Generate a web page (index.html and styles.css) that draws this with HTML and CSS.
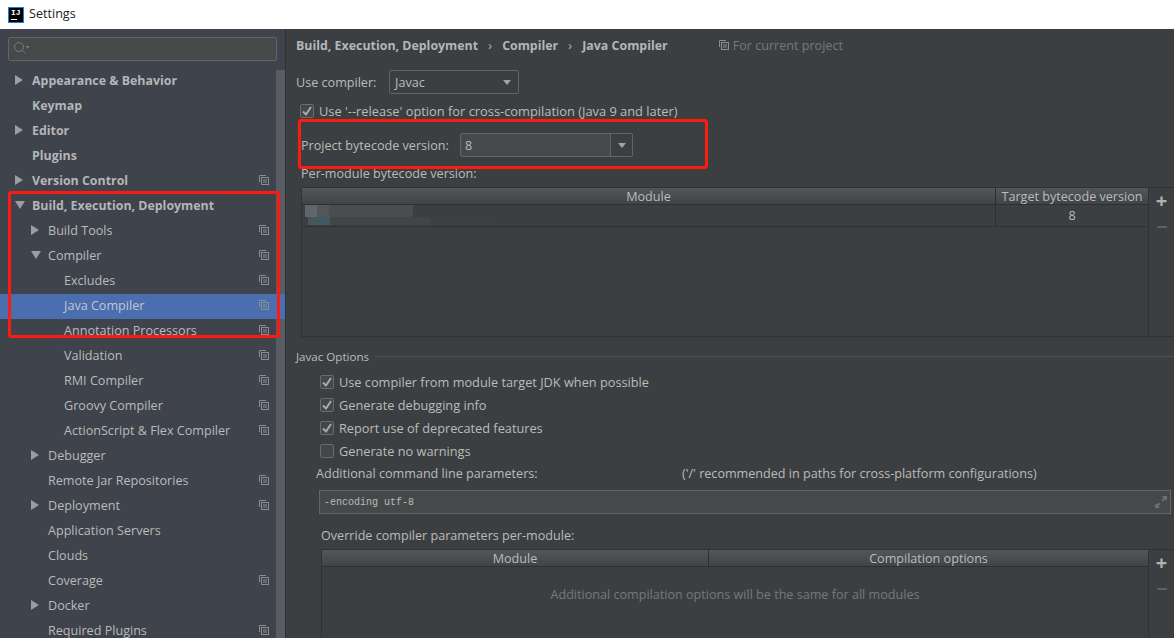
FILE: index.html
```html
<!DOCTYPE html>
<html lang="en">
<head>
  <meta charset="UTF-8">
  <title>Settings</title>
  <link rel="stylesheet" href="styles.css">
</head>
<body>
  <svg class="defs" width="0" height="0">
    <symbol id="copy" viewBox="0 0 10 10">
      <path d="M0.5 7V0.5H7" fill="none" stroke="#8a8d91"/>
      <rect x="2.5" y="2.5" width="7" height="7" fill="none" stroke="#8a8d91"/>
      <path d="M4 5H8M4 7H8" stroke="#8a8d91"/>
    </symbol>
    <symbol id="check" viewBox="0 0 14 14">
      <path d="M3 7.5L6 10.5L11 3" fill="none" stroke="#a9abad" stroke-width="2"/>
    </symbol>
  </svg>

  <div class="titlebar">
    <div class="logo"><span class="logo-text">IJ</span><span class="logo-bar"></span></div>
    <span class="title-text">Settings</span>
  </div>

  <div class="window">
    <aside class="sidebar">
      <div class="search">
        <svg width="18" height="14" viewBox="0 0 18 14">
          <circle cx="6" cy="6" r="4.5" fill="none" stroke="#777b80"/>
          <path d="M9.5 9.5L12.5 12.5" stroke="#777b80"/>
          <path d="M12.5 5H17L14.7 7.5Z" fill="#777b80"/>
        </svg>
      </div>
      <div class="scrollbar"></div>
      <ul class="tree">
        <li class="row bold"><i class="arrow right"></i>Appearance &amp; Behavior</li>
        <li class="row bold"><i class="arrow"></i>Keymap</li>
        <li class="row bold"><i class="arrow right"></i>Editor</li>
        <li class="row bold"><i class="arrow"></i>Plugins</li>
        <li class="row bold"><i class="arrow right"></i>Version Control<svg class="copy"><use href="#copy"/></svg></li>
        <li class="row bold"><i class="arrow down"></i>Build, Execution, Deployment</li>
        <li class="row lvl1"><i class="arrow right"></i>Build Tools<svg class="copy"><use href="#copy"/></svg></li>
        <li class="row lvl1"><i class="arrow down"></i>Compiler<svg class="copy"><use href="#copy"/></svg></li>
        <li class="row lvl2">Excludes<svg class="copy"><use href="#copy"/></svg></li>
        <li class="row lvl2 selected">Java Compiler<svg class="copy"><use href="#copy"/></svg></li>
        <li class="row lvl2">Annotation Processors<svg class="copy"><use href="#copy"/></svg></li>
        <li class="row lvl2">Validation<svg class="copy"><use href="#copy"/></svg></li>
        <li class="row lvl2">RMI Compiler<svg class="copy"><use href="#copy"/></svg></li>
        <li class="row lvl2">Groovy Compiler<svg class="copy"><use href="#copy"/></svg></li>
        <li class="row lvl2">ActionScript &amp; Flex Compiler<svg class="copy"><use href="#copy"/></svg></li>
        <li class="row lvl1"><i class="arrow right"></i>Debugger</li>
        <li class="row lvl1"><i class="arrow"></i>Remote Jar Repositories<svg class="copy"><use href="#copy"/></svg></li>
        <li class="row lvl1"><i class="arrow right"></i>Deployment<svg class="copy"><use href="#copy"/></svg></li>
        <li class="row lvl1"><i class="arrow"></i>Application Servers</li>
        <li class="row lvl1"><i class="arrow"></i>Clouds</li>
        <li class="row lvl1"><i class="arrow"></i>Coverage<svg class="copy"><use href="#copy"/></svg></li>
        <li class="row lvl1"><i class="arrow right"></i>Docker</li>
        <li class="row lvl1"><i class="arrow"></i>Required Plugins<svg class="copy"><use href="#copy"/></svg></li>
      </ul>
      <div class="highlight highlight-tree"></div>
    </aside>

    <main class="content">
      <div class="highlight highlight-version"></div>

      <div class="breadcrumb">
        <span class="crumb">Build, Execution, Deployment</span>
        <span class="sep">›</span>
        <span class="crumb">Compiler</span>
        <span class="sep">›</span>
        <span class="crumb">Java Compiler</span>
        <span class="scope"><svg class="copy"><use href="#copy"/></svg>For current project</span>
      </div>

      <div class="field compiler-field">
        <label class="compiler-label">Use compiler:</label>
        <div class="select compiler-select">Javac<i class="caret"></i></div>
      </div>

      <div class="check-row release-row">
        <span class="checkbox"><svg><use href="#check"/></svg></span>
        <span>Use '--release' option for cross-compilation (Java 9 and later)</span>
      </div>

      <div class="field version-field">
        <label class="version-label">Project bytecode version:</label>
        <div class="combo"><span class="combo-value">8</span><span class="combo-btn"><i class="caret"></i></span></div>
      </div>

      <div class="per-module-label">Per-module bytecode version:</div>

      <div class="table-wrap module-table">
        <div class="table">
          <div class="thead">
            <div class="th grow">Module</div>
            <div class="th target-col">Target bytecode version</div>
          </div>
          <div class="tr">
            <div class="td grow">
              <svg class="blur" width="190" height="21" viewBox="0 0 190 21">
                <rect x="3" y="0" width="12" height="12" fill="#5f666c"/>
                <rect x="15" y="0" width="12" height="12" fill="#50565a"/>
                <rect x="27" y="0" width="84" height="12" fill="#494d50"/>
                <rect x="6" y="12" width="10" height="8" fill="#4a5558"/>
                <rect x="16" y="12" width="12" height="8" fill="#3f5a62"/>
                <rect x="28" y="12" width="100" height="8" fill="#414548"/>
                <rect x="128" y="12" width="60" height="6" fill="#3e4143"/>
              </svg>
            </div>
            <div class="td target-col center">8</div>
          </div>
        </div>
        <div class="toolbar">
          <span class="tool-plus">+</span>
          <span class="tool-minus"></span>
        </div>
      </div>

      <div class="group-title"><span>Javac Options</span><span class="group-line"></span></div>

      <div class="options">
        <div class="check-row"><span class="checkbox"><svg><use href="#check"/></svg></span><span>Use compiler from module target JDK when possible</span></div>
        <div class="check-row"><span class="checkbox"><svg><use href="#check"/></svg></span><span>Generate debugging info</span></div>
        <div class="check-row"><span class="checkbox"><svg><use href="#check"/></svg></span><span>Report use of deprecated features</span></div>
        <div class="check-row"><span class="checkbox"></span><span>Generate no warnings</span></div>
      </div>

      <div class="params-label">
        <span class="params-name">Additional command line parameters:</span>
        <span>('/' recommended in paths for cross-platform configurations)</span>
      </div>

      <div class="params-input">
        <span>-encoding utf-8</span>
        <svg width="14" height="14" viewBox="0 0 14 14">
          <path d="M8 1H13V6L11.3 4.3L9 6.5L7.5 5L9.7 2.7Z" fill="#6c7072"/>
          <path d="M6 13H1V8L2.7 9.7L5 7.5L6.5 9L4.3 11.3Z" fill="#6c7072"/>
        </svg>
      </div>

      <div class="override-label">Override compiler parameters per-module:</div>

      <div class="table-wrap override-table">
        <div class="table">
          <div class="thead">
            <div class="th module-col">Module</div>
            <div class="th grow">Compilation options</div>
          </div>
          <div class="empty-text">Additional compilation options will be the same for all modules</div>
        </div>
        <div class="toolbar">
          <span class="tool-plus">+</span>
          <span class="tool-minus"></span>
        </div>
      </div>
    </main>
  </div>
</body>
</html>
```

FILE: styles.css
```css
* {
  box-sizing: border-box;
}

html, body {
  margin: 0;
  padding: 0;
  height: 638px;
  overflow: hidden;
}

body {
  font-family: "Open Sans", "Noto Sans", Arial, sans-serif;
  font-size: 12.6px;
  color: #bbbbbb;
  background: #3c3f41;
}

.defs {
  display: block;
  position: absolute;
}

.titlebar {
  height: 29px;
  background: #fff;
  color: #222;
  display: flex;
  align-items: center;
  gap: 5px;
  padding-left: 8px;
  font-size: 12.6px;
}

.title-text {
  padding-bottom: 2px;
}

.logo {
  width: 16px;
  height: 16px;
  background: #000;
  border: 1px solid #1f7fd8;
  color: #fff;
}

.logo-text {
  display: block;
  font: bold 8px/9px "Liberation Mono", monospace;
  padding-left: 2px;
}

.logo-bar {
  display: block;
  width: 6px;
  height: 1px;
  margin: 2px 0 0 2px;
  background: #fff;
}

.window {
  display: flex;
  height: 609px;
}

/* left tree */
.sidebar {
  width: 286px;
  flex: none;
  background: #3e434c;
  border-right: 1px solid #2f3136;
  position: relative;
  overflow: hidden;
}

.search {
  height: 24px;
  margin: 8px 8px 0;
  width: 269px;
  background: #45494a;
  border: 1px solid #646464;
  border-radius: 2px;
  padding: 3px 0 0 4px;
}

.search svg {
  display: block;
}

.scrollbar {
  position: absolute;
  left: 276px;
  top: 41px;
  bottom: 0;
  width: 9px;
  background: rgba(115, 118, 122, 0.5);
}

.tree {
  list-style: none;
  margin: 8px 0 0;
  padding: 0;
}

.row {
  height: 25px;
  display: flex;
  align-items: center;
  padding: 0 0 3px 15px;
  white-space: nowrap;
  position: relative;
}

.bold {
  font-weight: 700;
  font-size: 12.4px;
  color: #b4b6b9;
}

.lvl1 {
  padding-left: 31px;
}

.lvl2 {
  padding-left: 64px;
}

.selected {
  background: #4b6eaf;
  color: #c0c6d0;
}

.arrow {
  width: 17px;
  flex: none;
  height: 10px;
  position: relative;
}

.arrow.right::before {
  content: "";
  position: absolute;
  left: 0;
  top: 0;
  border-left: 8px solid #9a9da1;
  border-top: 5px solid transparent;
  border-bottom: 5px solid transparent;
}

.arrow.down::before {
  content: "";
  position: absolute;
  left: 0;
  top: 1px;
  border-top: 8px solid #9a9da1;
  border-left: 5px solid transparent;
  border-right: 5px solid transparent;
}

.copy {
  width: 10px;
  height: 10px;
  flex: none;
}

.row .copy {
  position: absolute;
  left: 259px;
  top: 6px;
}

.highlight {
  position: absolute;
  border: 3px solid #fb1b12;
  border-radius: 3px;
  pointer-events: none;
  z-index: 5;
}

.highlight-tree {
  left: 8px;
  top: 162px;
  width: 272px;
  height: 147px;
}

/* right panel */
.content {
  flex: 1;
  min-width: 0;
  position: relative;
  padding-left: 10px;
  overflow: hidden;
}

.highlight-version {
  left: 12px;
  top: 90px;
  width: 410px;
  height: 50px;
}

.breadcrumb {
  height: 32px;
  display: flex;
  align-items: center;
  white-space: nowrap;
  font-weight: 700;
  font-size: 12.4px;
  color: #b4b6b9;
}

.sep {
  font-weight: 400;
  width: 24px;
  text-align: center;
}

.scope {
  font-weight: 400;
  font-size: 12.6px;
  color: #787878;
  display: flex;
  align-items: center;
  gap: 4px;
  margin-left: 51px;
}

.field {
  display: flex;
  align-items: center;
}

.compiler-field {
  height: 24px;
  margin-top: 9px;
}

.compiler-label {
  width: 93px;
}

.select {
  height: 24px;
  background: #3c3f41;
  border: 1px solid #646464;
  border-radius: 2px;
  display: flex;
  align-items: center;
  justify-content: space-between;
  padding: 0 7px 0 5px;
}

.compiler-select {
  width: 130px;
}

.caret {
  width: 0;
  height: 0;
  border-top: 5px solid #a0a2a4;
  border-left: 4.5px solid transparent;
  border-right: 4.5px solid transparent;
}

.check-row {
  height: 23px;
  display: flex;
  align-items: center;
  gap: 5px;
  white-space: nowrap;
}

.checkbox {
  width: 14px;
  height: 14px;
  flex: none;
  background: #43474a;
  border: 1px solid #6b6b6b;
  border-radius: 2px;
  position: relative;
}

.checkbox svg {
  position: absolute;
  left: -1px;
  top: -1px;
  width: 14px;
  height: 14px;
}

.release-row {
  margin: 5px 0 0 4px;
  font-size: 12.85px;
}

.version-field {
  height: 24px;
  margin: 11px 0 0 5px;
}

.version-label {
  width: 159px;
}

.combo {
  width: 173px;
  height: 24px;
  background: #45494a;
  border: 1px solid #646464;
  border-radius: 2px;
  display: flex;
  align-items: center;
}

.combo-value {
  flex: 1;
  padding-left: 4px;
}

.combo-btn {
  width: 22px;
  height: 100%;
  border-left: 1px solid #646464;
  background: #3c3f41;
  display: flex;
  align-items: center;
  justify-content: center;
}

.per-module-label {
  height: 18px;
  line-height: 18px;
  margin: 8px 0 0 5px;
}

.table-wrap {
  display: flex;
  border: 1px solid #323232;
  border-right: none;
  overflow: hidden;
}

.module-table {
  margin: 4px 0 0 5px;
  height: 150px;
}

.table {
  flex: 1;
  min-width: 0;
  border-right: 1px solid #323232;
}

.thead {
  display: flex;
  height: 17px;
  background: linear-gradient(#53575a, #414447);
  border-bottom: 1px solid #2d2f31;
}

.th {
  text-align: center;
  line-height: 17px;
  white-space: nowrap;
}

.grow {
  flex: 1;
}

.target-col {
  width: 153px;
  flex: none;
  border-left: 1px solid #2d2f31;
}

.tr {
  display: flex;
  height: 22px;
  border-bottom: 1px solid #323232;
}

.td {
  line-height: 21px;
  overflow: hidden;
}

.center {
  text-align: center;
}

.blur {
  display: block;
}

.toolbar {
  width: 25px;
  flex: none;
  display: flex;
  flex-direction: column;
  align-items: center;
  padding-top: 1px;
}

.tool-plus {
  font-size: 20px;
  font-weight: 700;
  line-height: 24px;
  color: #afb1b3;
}

.tool-minus {
  display: block;
  width: 10px;
  height: 2px;
  margin-top: 13px;
  background: #5e6060;
}

.group-title {
  display: flex;
  align-items: center;
  gap: 6px;
  height: 18px;
  margin-top: 10px;
  font-size: 11.6px;
}

.group-line {
  flex: 1;
  height: 1px;
  background: #515151;
}

.options {
  margin: 5px 0 0 24px;
  font-size: 12.75px;
}

.params-label {
  height: 18px;
  line-height: 18px;
  margin: 3px 0 0 20px;
  display: flex;
  white-space: nowrap;
}

.params-name {
  width: 366px;
}

.params-input {
  height: 24px;
  width: 852px;
  margin: 7px 0 0 23px;
  background: #45494a;
  border: 1px solid #646464;
  display: flex;
  align-items: center;
  justify-content: space-between;
  padding: 0 2px 0 4px;
  font-family: "Liberation Mono", monospace;
  font-size: 10px;
}

.override-label {
  height: 18px;
  line-height: 18px;
  margin: 13px 0 0 25px;
}

.override-table {
  margin: 4px 0 0 25px;
  height: 100px;
}

.module-col {
  width: 387px;
  flex: none;
  border-right: 1px solid #2d2f31;
}

.empty-text {
  text-align: center;
  color: #787878;
  margin-top: 19px;
}
```
